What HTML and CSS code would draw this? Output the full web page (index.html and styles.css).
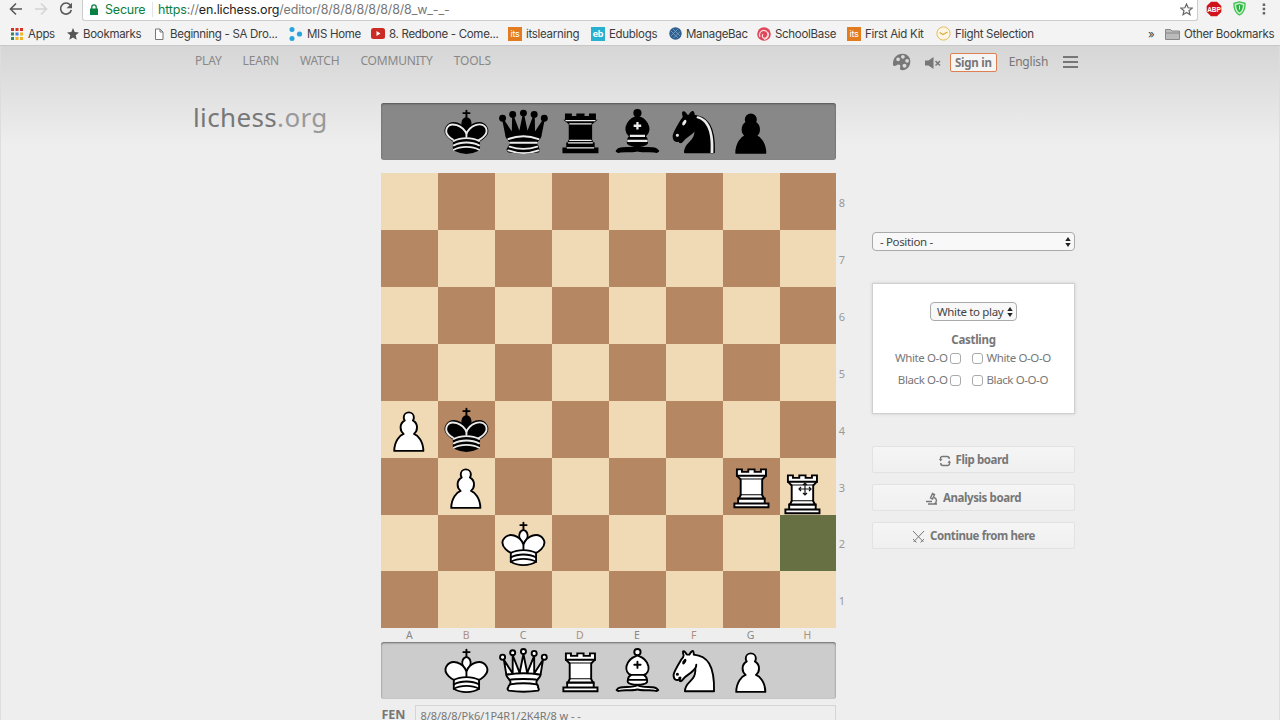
FILE: index.html
```
<!DOCTYPE html>
<html lang="en">

<head>
  <meta charset="UTF-8">
  <meta name="viewport" content="width=device-width, initial-scale=1.0">
  <title>Board editor • lichess.org</title>
  <link rel="stylesheet" href="styles.css">
</head>

<body>
  <!-- Piece set, 45x45 units each -->
  <svg class="defs" width="0" height="0">
    <symbol id="wK" viewBox="0 0 45 45">
      <path d="M22.5 11.63V6M20 8h5" />
      <path fill="#fff" d="M22.5 25s4.5-7.5 3-10.5c0 0-1-2.5-3-2.5s-3 2.5-3 2.5c-1.5 3 3 10.5 3 10.5" />
      <path fill="#fff" d="M12.5 37c5.5 3.5 14.5 3.5 20 0v-7s9-4.5 6-10.5c-4-6.5-13.5-3.5-16 4V27v-3.5c-2.5-7.5-12-10.5-16-4-3 6 6 10.5 6 10.5v7" />
      <path d="M12.5 30c5.5-3 14.5-3 20 0m-20 3.5c5.5-3 14.5-3 20 0m-20 3.5c5.5-3 14.5-3 20 0" />
    </symbol>
    <symbol id="bK" viewBox="0 0 45 45">
      <path d="M22.5 11.6V6M20 8h5" />
      <path fill="#000" d="M22.5 25s4.5-7.5 3-10.5c0 0-1-2.5-3-2.5s-3 2.5-3 2.5c-1.5 3 3 10.5 3 10.5" />
      <path fill="#000" d="M12.5 37a22.3 22.3 0 0 0 20 0v-7s9-4.5 6-10.5c-4-6.5-13.5-3.5-16 4V27v-3.5c-2.5-7.5-12-10.5-16-4-3 6 6 10.5 6 10.5z" />
      <path stroke="#ececec" d="M32 29.5s8.5-4 6-9.7C34.1 14 25 18 22.5 24.6v2.1-2.1C20 18 9.9 14 7 19.9c-2.5 5.6 4.8 9 4.8 9" />
      <path stroke="#ececec" d="M12.5 30c5.5-3 14.5-3 20 0m-20 3.5c5.5-3 14.5-3 20 0m-20 3.5c5.5-3 14.5-3 20 0" />
    </symbol>
    <symbol id="wQ" viewBox="0 0 45 45">
      <g fill="#fff">
        <path d="M8 12a2 2 0 1 1-4 0 2 2 0 1 1 4 0zm16.5-4.5a2 2 0 1 1-4 0 2 2 0 1 1 4 0zM41 12a2 2 0 1 1-4 0 2 2 0 1 1 4 0zM16 8.5a2 2 0 1 1-4 0 2 2 0 1 1 4 0zM33 9a2 2 0 1 1-4 0 2 2 0 1 1 4 0z" />
        <path d="M9 26c8.5-1.5 21-1.5 27 0l2-12-7 11V11l-5.5 13.5-3-15-3 15-5.5-14V25L7 14l2 12z" />
        <path d="M9 26c0 2 1.5 2 2.5 4 1 1.5 1 1 .5 3.5-1.5 1-1.5 2.5-1.5 2.5-1.5 1.5.5 2.5.5 2.5 6.5 1 16.5 1 23 0 0 0 1.5-1 0-2.5 0 0 .5-1.5-1-2.5-.5-2.5-.5-2 .5-3.5 1-2 2.5-2 2.5-4-8.5-1.5-18.5-1.5-27 0z" />
      </g>
      <path d="M11.5 30c3.5-1 18.5-1 22 0M12 33.5c6-1 15-1 21 0" />
    </symbol>
    <symbol id="bQ" viewBox="0 0 45 45">
      <g fill="#000">
        <g stroke="none">
          <circle cx="6" cy="12" r="2.75" />
          <circle cx="14" cy="9" r="2.75" />
          <circle cx="22.5" cy="8" r="2.75" />
          <circle cx="31" cy="9" r="2.75" />
          <circle cx="39" cy="12" r="2.75" />
        </g>
        <path d="M9 26c8.5-1.5 21-1.5 27 0l2.5-12.5L31 25l-.3-14.1-5.2 13.6-3-14.5-3 14.5-5.2-13.6L14 25 6.5 13.5 9 26z" />
        <path d="M9 26c0 2 1.5 2 2.5 4 1 1.5 1 1 .5 3.5-1.5 1-1.5 2.5-1.5 2.5-1.5 1.5.5 2.5.5 2.5 6.5 1 16.5 1 23 0 0 0 1.5-1 0-2.5 0 0 .5-1.5-1-2.5-.5-2.5-.5-2 .5-3.5 1-2 2.5-2 2.5-4-8.5-1.5-18.5-1.5-27 0z" />
      </g>
      <path stroke="#ececec" d="M10.5 28.5a35 35 1 0 1 24 0M12 31.500h21M11.5 34.5a35 35 1 0 0 22 0M10.5 37.5a35 35 1 0 0 24 0" />
    </symbol>
    <symbol id="wR" viewBox="0 0 45 45">
      <g fill="#fff" stroke-linejoin="miter">
        <path d="M9 39h27v-3H9v3zm3-3v-4h21v4H12zm-1-22V9h4v2h5V9h5v2h5V9h4v5" />
        <path d="M34 14l-3 3H14l-3-3" />
        <path d="M31 17v12.5H14V17" />
        <path d="M31 29.5l1.5 2.5h-20l1.5-2.5" />
      </g>
      <path d="M11 14h23" />
    </symbol>
    <symbol id="bR" viewBox="0 0 45 45">
      <g fill="#000" stroke-linejoin="miter">
        <path d="M9 39h27v-3H9v3zm3.5-7l1.5-2.5h17l1.5 2.5h-20zm-.5 4v-4h21v4H12z" />
        <path d="M14 29.5v-13h17v13H14z" />
        <path d="M14 16.5L11 14h23l-3 2.5H14zM11 14V9h4v2h5V9h5v2h5V9h4v5H11z" />
      </g>
      <path stroke="#ececec" stroke-width="1" d="M12 35.5h21m-20-4h19m-18-2h17m-17-13h17M11 14h23" />
    </symbol>
    <symbol id="wB" viewBox="0 0 45 45">
      <g fill="#fff">
        <path d="M9 36c3.4-1 10.1.4 13.5-2 3.4 2.4 10.1 1 13.5 2 0 0 1.6.5 3 2-.7 1-1.6 1-3 .5-3.4-1-10.1.5-13.5-1-3.4 1.5-10.1 0-13.5 1-1.4.5-2.3.5-3-.5 1.4-2 3-2 3-2z" />
        <path d="M15 32c2.5 2.5 12.5 2.5 15 0 .5-1.5 0-2 0-2 0-2.5-2.5-4-2.5-4 5.5-1.5 6-11.5-5-15.5-11 4-10.5 14-5 15.5 0 0-2.5 1.5-2.5 4 0 0-.5.5 0 2z" />
        <path d="M25 8a2.5 2.5 0 1 1-5 0 2.5 2.5 0 1 1 5 0z" />
      </g>
      <path d="M17.5 26h10M15 30h15m-7.5-14.5v5M20 18h5" />
    </symbol>
    <symbol id="bB" viewBox="0 0 45 45">
      <g fill="#000">
        <path d="M9 36c3.4-1 10.1.4 13.5-2 3.4 2.4 10.1 1 13.5 2 0 0 1.6.5 3 2-.7 1-1.6 1-3 .5-3.4-1-10.1.5-13.5-1-3.4 1.5-10.1 0-13.5 1-1.4.5-2.3.5-3-.5 1.4-2 3-2 3-2z" />
        <path d="M15 32c2.5 2.5 12.5 2.5 15 0 .5-1.5 0-2 0-2 0-2.5-2.5-4-2.5-4 5.5-1.5 6-11.5-5-15.5-11 4-10.5 14-5 15.5 0 0-2.5 1.5-2.5 4 0 0-.5.5 0 2z" />
        <path d="M25 8a2.5 2.5 0 1 1-5 0 2.5 2.5 0 1 1 5 0z" />
      </g>
      <path stroke="#ececec" stroke-width="1.8" stroke-linecap="butt" d="M16.500 26h12M14.500 30h16m-8-15v6M19.500 18h6" />
    </symbol>
    <symbol id="wN" viewBox="0 0 45 45">
      <path fill="#fff" d="M22 10c10.5 1 16.5 8 16 29H15c0-9 10-6.5 8-21" />
      <path fill="#fff" d="M24 18c.38 2.91-5.55 7.37-8 9-3 2-2.82 4.34-5 4-1.04-.94 1.41-3.04 0-3-1 0 .19 1.23-1 2-1 0-4 1-4-4 0-2 6-12 6-12s1.89-1.9 2-3.5c-.73-1-.5-2-.5-3 1-1 3 2.5 3 2.5h2s.78-2 2.5-3c1 0 1 3 1 3" />
      <path fill="#000" d="M9.5 25.5a.5.5 0 1 1-1 0 .5.5 0 1 1 1 0zm5.43-9.75a.5 1.5 30 1 1-.86-.5.5 1.5 30 1 1 .86.5z" />
    </symbol>
    <symbol id="bN" viewBox="0 0 45 45">
      <path fill="#000" d="M22 10c10.5 1 16.5 8 16 29H15c0-9 10-6.5 8-21" />
      <path fill="#000" d="M24 18c.38 2.91-5.55 7.37-8 9-3 2-2.82 4.34-5 4-1.04-.94 1.41-3.04 0-3-1 0 .19 1.23-1 2-1 0-4 1-4-4 0-2 6-12 6-12s1.89-1.9 2-3.5c-.73-1-.5-2-.5-3 1-1 3 2.5 3 2.5h2s.78-2 2.5-3c1 0 1 3 1 3" />
      <path fill="#ececec" stroke="#ececec" d="M9.5 25.5a.5.5 0 1 1-1 0 .5.5 0 1 1 1 0zm5.43-9.75a.5 1.5 30 1 1-.86-.5.5 1.5 30 1 1 .86.5z" />
      <path fill="#ececec" stroke="none" d="M24.55 10.4l-.45 1.45.5.15c3.15 1 5.65 2.49 7.9 6.75S35.75 29.06 35.25 39l-.05.5h2.25l.05-.5c.5-10.06-.88-16.85-3.25-21.34-2.37-4.49-5.79-6.64-9.19-7.16l-.51-.1z" />
    </symbol>
    <symbol id="wP" viewBox="0 0 45 45">
      <path fill="#fff" d="M22 9c-2.21 0-4 1.79-4 4 0 .89.29 1.71.78 2.38-1.95 1.12-3.28 3.21-3.28 5.62 0 2.03.94 3.84 2.41 5.03-3 1.06-7.41 5.55-7.41 13.47h23c0-7.92-4.41-12.41-7.41-13.47 1.47-1.19 2.41-3 2.41-5.03 0-2.41-1.33-4.5-3.28-5.62.49-.67.78-1.49.78-2.38 0-2.21-1.79-4-4-4z" />
    </symbol>
    <symbol id="bP" viewBox="0 0 45 45">
      <path fill="#000" d="M22 9c-2.21 0-4 1.79-4 4 0 .89.29 1.71.78 2.38-1.95 1.12-3.28 3.21-3.28 5.62 0 2.03.94 3.84 2.41 5.03-3 1.06-7.41 5.55-7.41 13.47h23c0-7.92-4.41-12.41-7.41-13.47 1.47-1.19 2.41-3 2.41-5.03 0-2.41-1.33-4.5-3.28-5.62.49-.67.78-1.49.78-2.38 0-2.21-1.79-4-4-4z" />
    </symbol>
    <symbol id="arrows" viewBox="0 0 6 10">
      <path fill="#222" stroke="none" d="M3 0l2.7 4H.3zM3 10L.3 6h5.4z" />
    </symbol>
  </svg>

  <div class="browser">
    <div class="toolbar">
      <svg class="tool back" width="14" height="14" viewBox="0 0 14 14"><path d="M13 7H1.8M7 1.5L1.5 7 7 12.5" /></svg>
      <svg class="tool forward" width="14" height="14" viewBox="0 0 14 14"><path d="M1 7h11.2M7 1.5L12.5 7 7 12.5" /></svg>
      <svg class="tool reload" width="14" height="14" viewBox="0 0 14 14"><path d="M11.3 3A5.5 5.5 0 1 0 12.4 8" /><path class="solid" d="M13 .8v5.4H7.6z" /></svg>
      <div class="address">
        <svg class="lock" width="8" height="11" viewBox="0 0 8 11"><path fill="#0b8043" d="M0 4.5h8V11H0z" /><path fill="none" stroke="#0b8043" stroke-width="1.3" d="M1.8 5V3a2.2 2.2 0 0 1 4.4 0v2" /></svg>
        <span class="secure">Secure</span>
        <span class="url"><span class="scheme">https</span>://<b>en.lichess.org</b>/editor/8/8/8/8/8/8/8/8_w_-_-</span>
        <svg class="star" width="13" height="13" viewBox="0 0 13 13"><path fill="none" stroke="#666" stroke-width="1.2" d="M6.5 1l1.6 3.8 4 .3-3.1 2.6 1 4-3.5-2.2L3 11.700l1-4L.9 5.100l4-.3z" /></svg>
      </div>
      <svg class="ext" width="16" height="16" viewBox="0 0 16 16"><path fill="#d0131b" d="M5 .7h6L15.300 5v6L11 15.300H5L.7 11V5z" /><text x="8" y="10.600" text-anchor="middle">ABP</text></svg>
      <svg class="ext shield" width="13" height="15" viewBox="0 0 13 15"><path fill="#c9f2cd" stroke="#3fc04f" stroke-width="1.300" d="M6.500.9L12 2.300c.3 5.500-1.500 9.500-5.500 11.700C2.500 11.800.7 7.800 1 2.300z" /><path fill="#2fb344" d="M6.500 3l3.300.9c0 3.500-1 6-3.300 7.600C4.200 9.900 3.200 7.400 3.200 3.900z" /><path stroke="#fff" d="M6.500 4.500v4" /></svg>
      <svg class="dots" width="4" height="12" viewBox="0 0 4 12"><path fill="#666" d="M.7.5h2.500V3H.7zm0 4.300h2.500v2.500H.7zm0 4.300h2.500v2.500H.7z" /></svg>
    </div>
    <div class="bookmarks">
      <a><svg width="13" height="13" viewBox="0 0 13 13"><path fill="#d93025" d="M0 1h3v3H0zm4.500 0h3v3h-3zM9 1h3v3H9z" /><path fill="#2e8b57" d="M0 5.500h3v3H0zM0 10h3v3H0z" /><path fill="#3f7de0" d="M4.500 5.500h3v3h-3z" /><path fill="#f0b429" d="M9 5.500h3v3H9zM4.500 10h3v3h-3zM9 10h3v3H9z" /></svg>Apps</a>
      <a><svg width="12" height="12" viewBox="0 0 12 12"><path fill="#555" d="M6 0l1.700 4 4.300.4-3.300 2.900 1 4.400L6 9.400l-3.700 2.300 1-4.400L0 4.400 4.300 4z" /></svg>Bookmarks</a>
      <a><svg class="doc" width="10" height="12" viewBox="0 0 10 12"><path fill="#fff" stroke="#777" d="M1.500 1H6l3 3v7.500H1.500zM6 1v3h3" /></svg>Beginning - SA Dro...</a>
      <a><svg width="14" height="14" viewBox="0 0 14 14"><g fill="#27a3dd"><circle cx="3" cy="2.500" r="2.500" /><circle cx="10.500" cy="7" r="2.600" /><circle cx="3" cy="11.500" r="2.500" /></g></svg>MIS Home</a>
      <a><svg width="14" height="11" viewBox="0 0 14 11"><rect width="14" height="11" rx="2.500" fill="#cc2a24" /><path fill="#fff" d="M5.500 3v5L9.500 5.500z" /></svg>8. Redbone - Come...</a>
      <a><i class="its">its</i>itslearning</a>
      <a><i class="edu">eb</i>Edublogs</a>
      <a><svg width="13" height="13" viewBox="0 0 13 13"><circle cx="6.500" cy="6.500" r="6.200" fill="#2f5f8f" /><path fill="none" stroke="#7fa6c9" stroke-width=".8" d="M2 4l7 7M4 2l7 7M2 9l7-7M4.500 11l6.500-6.500" /></svg>ManageBac</a>
      <a><svg width="14" height="14" viewBox="0 0 14 14"><circle cx="7" cy="7" r="6.800" fill="#e0465a" /><path fill="none" stroke="#fbdde0" stroke-width="1.200" d="M3 10c-2-5 3-8 6-6s2 6-.5 7-4-1.500-2.500-4M7 12.500c4-1 5-4 4-7" /></svg>SchoolBase</a>
      <a><i class="its">its</i>First Aid Kit</a>
      <a><svg width="15" height="15" viewBox="0 0 15 15"><circle cx="7.500" cy="7.500" r="6.600" fill="#fdf6e3" stroke="#e8bb5c" /><path fill="none" stroke="#e0a93c" stroke-width="1.300" d="M3.500 6.500l3.500 2 4.500-2.500" /></svg>Flight Selection</a>
      <a class="more">»</a>
      <a><svg width="15" height="12" viewBox="0 0 15 12"><path fill="#bbb" stroke="#888" d="M.5 11V1.500h5L7 3h7.500v8.500H.5zM.5 5h14" /></svg>Other Bookmarks</a>
    </div>
  </div>

  <div class="page">
    <header>
      <nav>
        <a>PLAY</a><a>LEARN</a><a>WATCH</a><a>COMMUNITY</a><a>TOOLS</a>
      </nav>
      <div class="user">
        <svg width="19" height="18" viewBox="0 0 19 18"><path fill="#777" fill-rule="evenodd" d="M1 12C.5 5 5 .8 10.500.8 15 .8 18.300 4 18.300 8.500c0 5-3.500 8.700-7.800 8.700-2.500 0-3-1.700-2.300-3.200.8-2-1-3-2.700-2.300C3.700 12.500 2 14 1 12zM4.200 6.300a1.900 1.900 0 1 0 3.800 0 1.900 1.900 0 1 0-3.800 0zm4.800-2.500a1.900 1.900 0 1 0 3.800 0 1.900 1.900 0 1 0-3.800 0zm4.200 4a1.900 1.900 0 1 0 3.800 0 1.900 1.900 0 1 0-3.800 0zm-2.700 4.900a2 2 0 1 0 4 0 2 2 0 1 0-4 0z" /></svg>
        <svg class="mute" width="16" height="12" viewBox="0 0 16 12"><path fill="#777" d="M0 3.500h3.500L8.500 0v12L3.500 8.500H0z" /><path stroke="#777" stroke-width="1.500" d="M10.500 4l4.500 4.500M15 4l-4.500 4.500" /></svg>
        <a class="signin">Sign in</a>
        <a class="lang">English</a>
        <svg class="burger" width="15" height="12" viewBox="0 0 15 12"><path stroke="#777" stroke-width="2" d="M0 1h15M0 6h15M0 11h15" /></svg>
      </div>
    </header>

    <main>
      <h1>lichess<span>.org</span></h1>

      <div class="editor">
        <div class="spare black"></div>
        <div class="board_wrap">
          <div class="board"></div>
          <div class="ranks"></div>
        </div>
        <div class="files"></div>
        <div class="spare white"></div>
        <div class="copyables"><strong>FEN</strong><div class="fen">8/8/8/8/Pk6/1P4R1/2K4R/8 w - -</div></div>
      </div>

      <aside>
        <div class="select position"><span>- Position -</span><svg width="6" height="10"><use href="#arrows" /></svg></div>
        <div class="metadata">
          <div class="select color"><span>White to play</span><svg width="6" height="10"><use href="#arrows" /></svg></div>
          <strong>Castling</strong>
          <div class="castling">
            <label>White O-O<i></i></label><label><i></i>White O-O-O</label>
            <label>Black O-O<i></i></label><label><i></i>Black O-O-O</label>
          </div>
        </div>
        <div class="actions">
          <a><svg width="12" height="12" viewBox="0 0 12 12"><path d="M1.500 5V3.500Q1.500 1.500 3.500 1.500h4.500Q10.300 1.500 10.300 4M10.500 7v1.500q0 2-2 2H4Q1.700 10.500 1.700 8" /><path class="solid" d="M0 4h3.500L1.700 6.500zM8.500 7.800H12L10.300 5.300z" /></svg>Flip board</a>
          <a><svg width="12" height="13" viewBox="0 0 12 13"><path d="M2 12h9M0 9.500h6M8 5.500c3 1 3.300 4.500.5 6.300" /><path d="M6.500 1.500L4.500 6l2 1 2-4.500z" /></svg>Analysis board</a>
          <a><svg width="13" height="13" viewBox="0 0 13 13"><path class="thin" d="M1 1l10.500 11M12 1L1.500 12M1 9l3.500 3.500M12 9l-3.500 3.500" /></svg>Continue from here</a>
        </div>
      </aside>
    </main>
  </div>

  <script>
    var rows = ['8', '8', '8', '8', 'Pk6', '1P4R1', '2K4R', '8'];

    function piece(letter, cls) {
      var name = letter == letter.toUpperCase() ? 'w' + letter : 'b' + letter.toUpperCase();
      return '<svg class="piece ' + (cls || '') + '"><use href="#' + name + '"/></svg>';
    }

    // Spare pieces, pointer and trash slots stay empty
    document.querySelector('.spare.black').innerHTML = '<i></i>' + 'kqrbnp'.split('').map(function (l) { return piece(l); }).join('');
    document.querySelector('.spare.white').innerHTML = '<i></i>' + 'KQRBNP'.split('').map(function (l) { return piece(l); }).join('');

    // Board
    var cells = [];
    rows.forEach(function (row) {
      row.split('').forEach(function (c) {
        if (c > '0' && c < '9') {
          for (var i = 0; i < +c; i++) cells.push('');
        } else cells.push(c);
      });
    });
    // the h2 rook is being dragged: it hangs over h3
    cells[55] = '';
    var html = '';
    for (var i = 0; i < 64; i++) {
      var cls = (i + (i >> 3)) % 2 ? 'dark' : 'light';
      if (i == 55) cls = 'over';
      html += '<div class="' + cls + '">' + (cells[i] ? piece(cells[i]) : '');
      if (i == 47) html += piece('R', 'dragging') + '<svg class="cursor" viewBox="0 0 14 14"><path d="M7 1v12M1 7h12M5 3l2-2 2 2M5 11l2 2 2-2M3 5L1 7l2 2M11 5l2 2-2 2"/></svg>';
      html += '</div>';
    }
    document.querySelector('.board').innerHTML = html;

    document.querySelector('.ranks').innerHTML = '<span>' + '87654321'.split('').join('</span><span>') + '</span>';
    document.querySelector('.files').innerHTML = '<span>' + 'ABCDEFGH'.split('').join('</span><span>') + '</span>';
  </script>
</body>

</html>
```
FILE: styles.css
```
* {
  box-sizing: border-box;
}

body {
  margin: 0;
  height: 720px;
  overflow: hidden;
  background: #eee;
  color: #777;
  font-family: "Noto Sans", sans-serif;
  font-size: 12px;
}

.defs {
  display: block;
}

i {
  font-style: normal;
}

/* browser */
.browser {
  height: 46px;
  background: #f3f3f3;
  border-bottom: 1px solid #c8c8c8;
  font-family: Inter, sans-serif;
  color: #3c3c3c;
}

.toolbar {
  display: flex;
  height: 21px;
  padding-left: 9px;
}

.tool {
  margin: 2px 11px 0 0;
  fill: none;
  stroke: #5a5a5a;
  stroke-width: 1.6;
  flex: none;
}

.tool.forward {
  stroke: #d4d4d4;
}

.tool .solid {
  fill: #5a5a5a;
  stroke: none;
}

.address {
  display: flex;
  width: 1116px;
  height: 21px;
  margin-left: -2px;
  padding: 0 4px 2px 7px;
  align-items: center;
  background: #fff;
  border: 1px solid #ccc;
  border-top: none;
  border-radius: 0 0 3px 3px;
  font-size: 12.5px;
}

.secure {
  width: 48px;
  margin-left: 7px;
  color: #0b8043;
  letter-spacing: -0.2px;
  border-right: 1px solid #e4e4e4;
}

.url {
  margin-left: 5px;
  color: #777;
  white-space: nowrap;
  letter-spacing: -0.16px;
}

.url b {
  font-weight: normal;
  color: #222;
}

.scheme {
  color: #0b8043;
}

.star {
  margin-left: auto;
}

.ext {
  flex: none;
  margin: 1px 0 0 8px;
}

.ext text {
  font: bold 6.5px "Liberation Sans", sans-serif;
  fill: #fff;
}

.ext.shield {
  margin-left: 11px;
}

.dots {
  margin: 3px 0 0 16px;
}

.bookmarks {
  display: grid;
  grid-template-columns: 56px 87px 135px 82px 137px 83px 78px 88px 90px 89px 212px 17px auto;
  height: 25px;
  padding-left: 11px;
  align-items: center;
  font-size: 11.5px;
  letter-spacing: -0.3px;
  white-space: nowrap;
}

.bookmarks a {
  display: flex;
  align-items: center;
}

.bookmarks svg,
.bookmarks i {
  flex: none;
  margin-right: 4px;
}

.bookmarks .doc {
  margin-right: 6px;
}

.its,
.edu {
  width: 14px;
  height: 14px;
  background: #e27c1e;
  color: #fff;
  font-size: 9px;
  line-height: 14px;
  text-align: center;
}

.edu {
  background: #27b0cf;
  font-weight: bold;
}

/* lichess page */
.page {
  height: 674px;
  background: linear-gradient(#d6d6d6, #eee 100px);
  border: solid #ddd;
  border-width: 0 1px;
}

header {
  display: flex;
  height: 57px;
  padding: 6px 0 0 194px;
}

nav {
  display: flex;
  width: 697px;
  gap: 21px;
  color: #888;
  letter-spacing: -0.18px;
}

.user {
  display: flex;
  height: 20px;
  align-items: center;
}

.mute {
  margin: 2px 9px 0 14px;
}

.signin {
  height: 19px;
  padding: 0 4px;
  border: 1px solid #dd8050;
  border-radius: 2px;
  background: #f5f5f5;
  line-height: 18px;
  font-weight: bold;
  font-size: 11.5px;
  letter-spacing: -0.25px;
}

.lang {
  margin: -2px 15px 0 12px;
  letter-spacing: -0.2px;
}

main {
  display: flex;
}

h1 {
  width: 380.4px;
  flex: none;
  margin: -4px 0 0;
  padding-left: 192px;
  font-size: 26px;
  font-weight: normal;
  line-height: 36px;
  letter-spacing: 0.36px;
  color: #777;
}

h1 span {
  color: #999;
}

.editor {
  width: 455px;
}

.spare {
  display: flex;
  height: 57px;
  border-radius: 3px;
}

.spare.black {
  background: #888;
  box-shadow: inset 0 1px 2px #555;
  margin-bottom: 13.3px;
}

.spare.white {
  background: #ccc;
  box-shadow: inset 0 1px 2px #666;
}

.spare i,
.piece {
  width: 56.875px;
  height: 56.875px;
}

.piece {
  display: block;
  fill: none;
  stroke: #000;
  stroke-width: 1.5;
  stroke-linecap: round;
  stroke-linejoin: round;
}

.board_wrap {
  display: flex;
  height: 455px;
}

.board {
  display: grid;
  flex: none;
  width: 455px;
  grid-template-columns: repeat(8, 1fr);
  grid-template-rows: repeat(8, 1fr);
}

.board div {
  position: relative;
}

.light {
  background: #f0d9b5;
}

.dark {
  background: #b58863;
}

.over {
  background: #667042;
}

.dragging {
  position: absolute;
  left: -5.5px;
  top: 6.5px;
  z-index: 2;
}

.cursor {
  position: absolute;
  left: 18px;
  top: 24px;
  width: 14px;
  height: 14px;
  z-index: 3;
  fill: none;
  stroke: #111;
  stroke-width: 1.2;
}

.ranks {
  display: grid;
  flex: none;
  width: 11px;
  grid-template-rows: repeat(8, 1fr);
  align-items: center;
  text-align: center;
  font-size: 11px;
  color: #999;
}

.ranks span {
  padding-top: 2px;
}

.files {
  display: grid;
  grid-template-columns: repeat(8, 1fr);
  height: 13.7px;
  line-height: 15px;
  text-align: center;
  font-size: 10.5px;
  color: #888;
}

.files span {
  margin-left: -1px;
}

.files span:nth-child(even) {
  color: #b09078;
}

.copyables {
  display: flex;
  margin-top: 6px;
  height: 22px;
  line-height: 20px;
}

.copyables strong {
  width: 36px;
  font-size: 12.5px;
}

.fen {
  flex: none;
  width: 421px;
  padding-left: 4px;
  border: 1px solid #d5d5d5;
  font-size: 11px;
  line-height: 20px;
  letter-spacing: -0.05px;
}

aside {
  width: 203px;
  margin-left: 35.6px;
  padding-top: 129px;
}

.select {
  display: flex;
  height: 19px;
  padding: 0 3px 0 7px;
  align-items: center;
  justify-content: space-between;
  border: 1px solid #aaa;
  border-radius: 4px;
  background: #f8f8f8;
  color: #444;
  font-size: 11.5px;
  letter-spacing: -0.35px;
  white-space: nowrap;
}

.metadata {
  display: flex;
  flex-direction: column;
  align-items: center;
  height: 131px;
  margin: 32px 0;
  padding-top: 18px;
  background: #fff;
  border: 1px solid #d0d0d0;
  box-shadow: 0 0 3px #ccc;
}

.color {
  width: 87px;
  padding-left: 6px;
  margin-bottom: 11px;
}

.metadata strong {
  line-height: 16px;
  font-size: 11.5px;
  letter-spacing: -0.3px;
}

.castling {
  display: grid;
  grid-template-columns: 1fr 1fr;
  column-gap: 11px;
  width: 190px;
  margin: -2px 13px 0 0;
}

.castling label {
  display: flex;
  height: 22.5px;
  align-items: center;
  font-size: 11.5px;
  letter-spacing: -0.4px;
}

.castling label:nth-child(odd) {
  justify-content: flex-end;
}

.castling i {
  width: 11px;
  height: 11px;
  margin: 2px 3px 0;
  border: 1px solid #aaa;
  border-radius: 3px;
  background: #fff;
}

.castling label:nth-child(odd) i {
  margin-right: 0;
}

.castling label:nth-child(even) i {
  margin-left: 0;
}

.actions a {
  display: flex;
  height: 27px;
  margin-bottom: 11px;
  align-items: center;
  justify-content: center;
  border: 1px solid #e2e2e2;
  border-radius: 2px;
  background: linear-gradient(#f5f5f5, #f0f0f0);
  font-weight: bold;
  font-size: 11.5px;
  letter-spacing: -0.4px;
}

.actions svg {
  margin: 2px 5px 0 0;
  fill: none;
  stroke: #777;
  stroke-width: 1.4;
}

.actions .solid {
  fill: #777;
  stroke: none;
}

.actions .thin {
  stroke-width: 1;
}
```
